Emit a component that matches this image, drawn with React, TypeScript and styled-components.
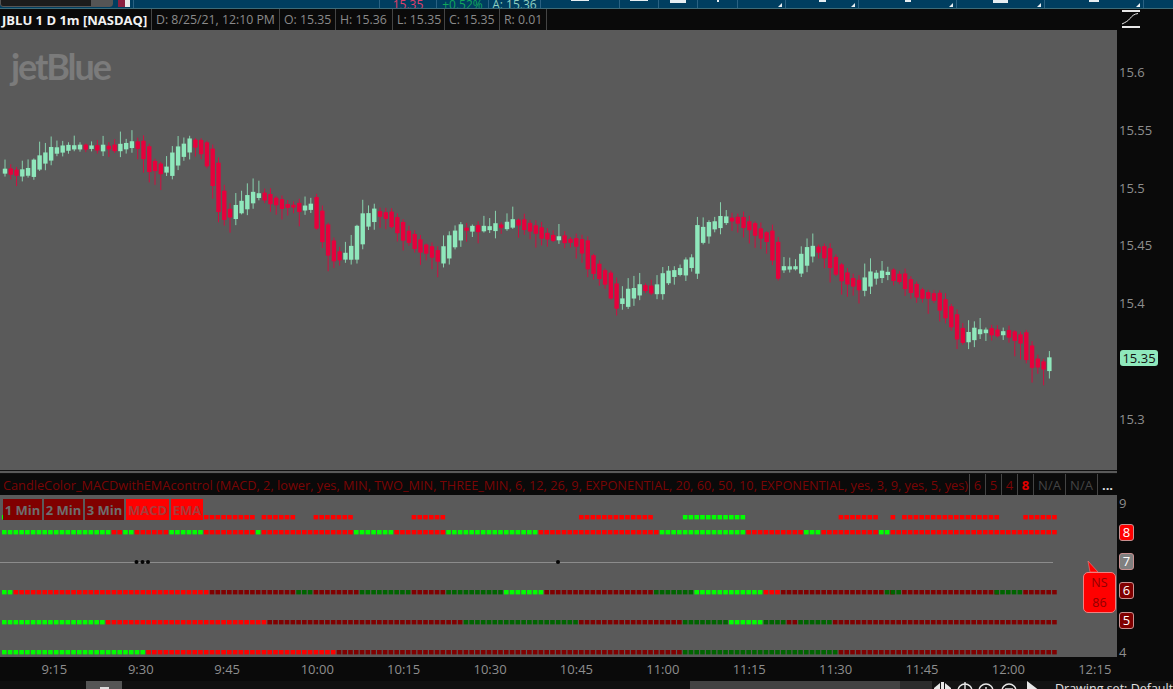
import React from "react";
import styled, { createGlobalStyle } from "styled-components";

const Global = createGlobalStyle`
  html, body { margin: 0; padding: 0; background: #0a0a0a; overflow: hidden; }
  * { box-sizing: border-box; }
`;

const FONT = `"Open Sans", "Noto Sans", "Liberation Sans", sans-serif`;

const Page = styled.div`
  width: 1173px; height: 689px; display: flex; flex-direction: column;
  background: #0a0a0a; font-family: ${FONT}; font-size: 13px; overflow: hidden;
`;
const TopBar = styled.div`
  height: 9px; flex: none; display: flex; background: #003e60;
  border-bottom: 1px solid #3d6b78; overflow: hidden;
`;
const TopCell = styled.div<{ $w: number }>`
  position: relative; width: ${(p) => p.$w}px; height: 8px; flex: none;
  display: flex; justify-content: center; align-items: flex-end;
  border-right: 1px solid #2a6283; overflow: hidden;
`;
const TopText = styled.span<{ $c: string }>`
  color: ${(p) => p.$c}; font-size: 12px; line-height: 14px; margin-bottom: -4px; white-space: nowrap;
`;
const TopInput = styled.div`
  position: absolute; left: 0; top: -6px; width: 113px; height: 13px; background: #1c1c1c;
  border: 1px solid #555; border-radius: 0 0 3px 3px; display: flex; justify-content: flex-end;
`;
const TopInputBtn = styled.div`width: 21px; background: #555;`;
const TopIcon = styled.div`
  position: absolute; left: 118px; top: 0; width: 12px; height: 7px;
  background: linear-gradient(90deg, #8a2040 0 55%, #e8e8e8 55% 100%);
`;
const TopBlock = styled.div<{ $w: number; $h: number }>`
  width: ${(p) => p.$w}px; height: ${(p) => p.$h}px; background: #e6eef2; align-self: flex-start;
`;
const Corner = styled.div`
  position: absolute; right: 3px; bottom: 1px; width: 0; height: 0;
  border-left: 4px solid transparent; border-bottom: 4px solid #e8eef2;
`;
const Main = styled.div`flex: none; height: 672px; display: flex;`;
const LeftCol = styled.div`width: 1117px; flex: none; display: flex; flex-direction: column;`;
const Header = styled.div`
  height: 21px; flex: none; display: flex; align-items: center; background: #0a0a0a;
`;
const HeadCell = styled.div<{ $w: number; $strong?: boolean }>`
  width: ${(p) => p.$w}px; height: 21px; flex: none; padding-left: ${(p) => (p.$strong ? 2 : 4)}px;
  display: flex; align-items: center; white-space: nowrap;
  border-right: 1px solid #444;
  font-size: ${(p) => (p.$strong ? 13 : 12.3)}px;
  color: ${(p) => (p.$strong ? "#f2f2f2" : "#8a8a8a")};
  font-weight: ${(p) => (p.$strong ? 700 : 400)};
`;
const PriceChart = styled.div`
  position: relative; height: 440px; flex: none; background: #5a5a5a;
`;
const ChartSvg = styled.svg`display: block;`;
const Logo = styled.div`
  position: absolute; left: 11px; top: 14px; color: #7b7b7b; font-family: "Lato", ${FONT};
  font-size: 36px; line-height: 44px; letter-spacing: -2.1px; font-weight: 700;
`;
const Divider = styled.div`
  height: 4px; flex: none; background: #5a5a5a;
  border-top: 1px solid #111; border-bottom: 1px solid #111;
`;
const LowerHeader = styled.div`
  height: 21px; flex: none; display: flex; background: #0a0a0a; align-items: center;
`;
const StudyTitle = styled.div`
  width: 969px; flex: none; padding-left: 3px; color: #7a0505; white-space: nowrap;
  font-size: 12.75px; overflow: hidden;
`;
const StudyCell = styled.div<{ $w: number; $c: string; $b?: boolean }>`
  width: ${(p) => p.$w}px; height: 21px; flex: none; display: flex; align-items: center; justify-content: center;
  border-left: 1px solid #444; color: ${(p) => p.$c}; font-weight: ${(p) => (p.$b ? 700 : 400)};
`;
const LowerChart = styled.div`
  position: relative; height: 162px; flex: none; background: #5a5a5a;
`;
const Labels = styled.div`
  position: absolute; left: 3px; top: 4px; display: flex; gap: 2px;
`;
const Label = styled.div<{ $w: number; $bright?: boolean }>`
  width: ${(p) => p.$w}px; height: 21px; display: flex; align-items: center; justify-content: center;
  background: ${(p) => (p.$bright ? "#ff0000" : "#800000")};
  color: ${(p) => (p.$bright ? "#a83a3a" : "#6e6e6e")};
  font-size: 13px; font-weight: 700; white-space: nowrap;
`;
const Bubble = styled.div`
  position: absolute; left: 1083px; top: 77px; width: 33px; height: 41px; background: #ff0000;
  border: 1px solid #f08080; border-radius: 5px; color: #8f0000; font-size: 12.5px; line-height: 20px;
  text-align: center; z-index: 2;
`;
const BubbleTail = styled.svg`position: absolute; left: 3px; top: -12px; overflow: visible;`;
const XAxis = styled.div`
  height: 24px; flex: none; display: flex; align-items: center; padding-left: 41.5px;
  background: #0a0a0a; color: #8e8e8e;
`;
const XTick = styled.div`width: 86.4px; flex: none; text-align: left; font-size: 13px;`;

const AxisCol = styled.div`
  width: 56px; flex: none; display: flex; flex-direction: column; color: #8e8e8e; position: relative;
`;
const SigmaIcon = styled.svg`position: absolute; left: 4px; top: 0;`;
const PriceAxis = styled.div`
  height: 461px; flex: none; padding-top: 34px; display: flex; flex-direction: column; position: relative;
`;
const PriceRow = styled.div`
  height: 57.83px; flex: none; display: flex; align-items: center; padding-left: 2px; font-size: 13px;
`;
const PriceTag = styled.div`
  position: absolute; left: 3px; top: 341px; width: 38px; height: 16px; border-radius: 3px;
  background: #8fe8bc; color: #111; font-size: 13px; line-height: 16px; text-align: center;
`;
const LowerAxis = styled.div`
  padding-top: 18px; display: flex; flex-direction: column;
`;
const LowerRow = styled.div<{ $gap?: number }>`
  height: 29.4px; flex: none; display: flex; align-items: center; padding-left: 2px; font-size: 13px;
  margin-top: ${(p) => p.$gap ?? 0}px;
`;
const LevelTag = styled.div<{ $bg: string }>`
  width: 15px; height: 17px; border-radius: 3px; background: ${(p) => p.$bg}; color: #fff;
  border: 1px solid #c89090; text-align: center; font-size: 13px; line-height: 15px;
`;
const BottomBar = styled.div`
  height: 8px; flex: none; display: flex; align-items: flex-start; overflow: hidden; background: #131313; position: relative;
`;
const BottomLeft = styled.div`width: 86px; height: 8px; flex: none; background: #0f0f0f;`;
const BottomTab = styled.div`
  width: 36px; height: 8px; flex: none; background: #555; display: flex; justify-content: center; padding-top: 6px;
`;
const TabMark = styled.div`width: 9px; height: 2px; background: #ddd;`;
const Track = styled.div`width: 568px; height: 8px; flex: none; background: #101010;`;
const Thumb = styled.div`
  width: 210px; height: 8px; flex: none; background: #424242; display: flex; justify-content: center;
`;
const Stepper = styled.div`
  width: 32px; height: 8px; flex: none; background: #2c2c2c;
`;
const BottomIcons = styled.svg`flex: none; display: block;`;
const DrawingSet = styled.div`
  position: absolute; left: 1055px; top: 0; color: #e0e0e0; font-size: 12.5px; line-height: 16px; white-space: nowrap;
`;

/* ---- candles ---- */
const path: [number, number][] = [
  [3,171],[15,173],[28,171],[40,160],[52,150],[75,147],[100,148],[120,148],[131,144],[140,148],[150,165],[165,172],[175,155],[190,143],[200,147],
  [210,165],[220,205],[228,216],[240,205],[255,195],[265,197],[280,205],[300,208],[310,205],[320,228],[330,252],[342,258],[352,250],[360,225],[372,213],
  [385,215],[395,226],[410,241],[425,250],[440,259],[450,240],[460,230],[475,228],[490,228],[505,225],[515,222],[530,228],[545,236],[565,240],[580,245],
  [590,265],[605,280],[618,305],[628,295],[640,287],[655,292],[665,276],[680,270],[692,260],[698,235],[712,225],[725,218],[740,222],[755,232],[768,240],
  [778,268],[795,268],[810,250],[820,250],[830,262],[845,280],[860,286],[870,277],[885,272],[900,280],[915,292],[935,298],[950,318],[960,340],[975,332],
  [985,332],[1005,333],[1020,340],[1032,362],[1042,367],[1052,360],
];
const pathY = (x: number) => {
  for (let i = 1; i < path.length; i++) {
    if (x <= path[i][0]) {
      const [x0, y0] = path[i - 1];
      const [x1, y1] = path[i];
      return y0 + ((y1 - y0) * (x - x0)) / (x1 - x0);
    }
  }
  return path[path.length - 1][1];
};
const rnd = (n: number) => {
  const v = Math.sin(n * 12.9898 + 4.1) * 43758.5453;
  return v - Math.floor(v);
};
const candles = Array.from({ length: 182 }, (_, i) => {
  const x = 5 + i * 5.77;
  const close = pathY(x) + (rnd(i) - 0.5) * 2;
  const open = pathY(x - 5.77) + (rnd(i - 1) - 0.5) * 2;
  const up = close <= open;
  const mid = (open + close) / 2;
  const half = Math.abs(close - open) * 1.0 + 1.2 + rnd(i + 90) * 1.6;
  const top = mid - half;
  const bot = mid + half;
  const high = top - 1 - rnd(i + 300) * (up ? 13 : 5);
  const low = bot + 1 + rnd(i + 600) * (up ? 7 : 15);
  return { x, top, bot, high, low, up };
});

/* ---- dot rows ---- */
const G = "#00ff00", R = "#ff0000", D = "#800000", K = "#006400";
type Seg = [number, number, string];
const rows: { y: number; segs: Seg[] }[] = [
  { y: 517, segs: [[2,3,G],[205,254,R],[262,295,R],[314,352,R],[411,444,R],[578,652,R],[682,744,G],[837,877,R],[889,895,R],[900,998,R],[1022,1056,R]] },
  { y: 532, segs: [[2,110,G],[111,122,R],[123,134,G],[134,168,R],[168,203,G],[203,255,R],[255,261,G],[261,352,R],[353,393,G],[394,444,R],[445,537,G],[537,658,R],[658,745,G],[745,802,R],[802,820,G],[820,877,R],[877,889,G],[889,1056,R]] },
  { y: 592, segs: [[2,13,G],[13,209,R],[209,295,D],[295,313,K],[313,359,D],[359,410,K],[410,444,D],[444,503,K],[503,542,G],[542,652,D],[652,693,K],[693,762,G],[762,779,R],[779,883,D],[883,890,K],[890,893,D],[893,900,K],[900,997,D],[997,1021,K],[1021,1056,D]] },
  { y: 622, segs: [[2,105,G],[105,266,R],[266,462,D],[462,578,K],[578,681,D],[681,727,K],[727,762,G],[762,785,K],[785,796,D],[796,830,K],[830,1056,D]] },
  { y: 652, segs: [[2,145,G],[145,336,R],[336,681,D],[681,838,K],[838,1056,D]] },
];
const dotsFor = (segs: Seg[]) => {
  const out: { x: number; c: string }[] = [];
  for (const [a, b, c] of segs) {
    let i = Math.round((a - 2) / 5.77);
    if (b - a < 5) { out.push({ x: a, c }); continue; }
    for (; 2 + i * 5.77 + 2 <= b; i++) out.push({ x: 2 + i * 5.77, c });
  }
  return out;
};

const Candles = () => (
  <ChartSvg width={1117} height={440} viewBox="0 30 1117 440">
    {candles.map((c, i) => (
      <g key={i} fill={c.up ? "#8fe8bc" : "#e6003c"}>
        <rect x={c.x - 0.5} y={c.high} width={1} height={c.low - c.high} opacity={0.85} />
        <rect x={c.x - 2.2} y={c.top} width={4.4} height={c.bot - c.top} />
      </g>
    ))}
  </ChartSvg>
);

const DotRows = () => (
  <ChartSvg width={1117} height={162} viewBox="0 495 1117 162">
    <rect x={0} y={562} width={1053} height={1} fill="#8c8c8c" />
    {[136.5, 142.5, 148, 558].map((x) => (
      <circle key={x} cx={x} cy={562} r={2} fill="#050505" />
    ))}
    {rows.map((r) =>
      dotsFor(r.segs).map((d, i) => (
        <rect key={`${r.y}-${i}`} x={d.x} y={r.y - 2} width={4.6} height={4.4} fill={d.c} />
      ))
    )}
  </ChartSvg>
);

const head: [number, string][] = [
  [152, "JBLU 1 D 1m [NASDAQ]"],
  [128, "D: 8/25/21, 12:10 PM"],
  [56, "O: 15.35"],
  [57, "H: 15.36"],
  [52, "L: 15.35"],
  [55, "C: 15.35"],
  [47, "R: 0.01"],
];
const times = ["9:15","9:30","9:45","10:00","10:15","10:30","10:45","11:00","11:15","11:30","11:45","12:00","12:15"];
const prices = ["15.6","15.55","15.5","15.45","15.4","","15.3"];

export default function App() {
  return (
    <Page>
      <Global />
      <TopBar>
        <TopCell $w={134}><TopInput><TopInputBtn /></TopInput><TopIcon /></TopCell>
        <TopCell $w={246} />
        <TopCell $w={57}><TopText $c="#e0406a">15.35</TopText></TopCell>
        <TopCell $w={52}><TopText $c="#12a85a">+0.52%</TopText></TopCell>
        <TopCell $w={52}><TopText $c="#8fd0c0">A: 15.36</TopText></TopCell>
        <TopCell $w={79}><TopBlock $w={18} $h={1} /></TopCell>
        <TopCell $w={39}><TopBlock $w={18} $h={1} /></TopCell>
        <TopCell $w={39}><TopBlock $w={16} $h={3} /></TopCell>
        <TopCell $w={40}><TopBlock $w={2} $h={2} /></TopCell>
        <TopCell $w={48}><Corner /></TopCell>
        <TopCell $w={73}><TopBlock $w={7} $h={2} /><Corner /></TopCell>
        <TopCell $w={98}><TopBlock $w={6} $h={2} /><Corner /></TopCell>
        <TopCell $w={88}><TopBlock $w={15} $h={3} /><Corner /></TopCell>
        <TopCell $w={99}><TopBlock $w={10} $h={2} /><Corner /></TopCell>
      </TopBar>
      <Main>
        <LeftCol>
          <Header>
            {head.map(([w, t], i) => (
              <HeadCell key={t} $w={w} $strong={i === 0}>{t}</HeadCell>
            ))}
          </Header>
          <PriceChart>
            <Candles />
            <Logo>jetBlue</Logo>
          </PriceChart>
          <Divider />
          <LowerHeader>
            <StudyTitle>CandleColor_MACDwithEMAcontrol (MACD, 2, lower, yes, MIN, TWO_MIN, THREE_MIN, 6, 12, 26, 9, EXPONENTIAL, 20, 60, 50, 10, EXPONENTIAL, yes, 3, 9, yes, 5, yes)</StudyTitle>
            <StudyCell $w={16} $c="#7a0505">6</StudyCell>
            <StudyCell $w={16} $c="#7a0505">5</StudyCell>
            <StudyCell $w={16} $c="#7a0505">4</StudyCell>
            <StudyCell $w={16} $c="#e00000" $b>8</StudyCell>
            <StudyCell $w={32} $c="#444">N/A</StudyCell>
            <StudyCell $w={32} $c="#444">N/A</StudyCell>
            <StudyCell $w={20} $c="#ddd" $b>...</StudyCell>
          </LowerHeader>
          <LowerChart>
            <DotRows />
            <Labels>
              <Label $w={39}>1 Min</Label>
              <Label $w={39}>2 Min</Label>
              <Label $w={39}>3 Min</Label>
              <Label $w={43} $bright>MACD</Label>
              <Label $w={32} $bright>EMA</Label>
            </Labels>
            <Bubble>
              <BubbleTail width={12} height={12} viewBox="0 0 12 12">
                <path d="M1 0 L11 11 L3 11 Z" fill="#ff0000" stroke="#f08080" strokeWidth={0.6} />
              </BubbleTail>
              NS<br />86
            </Bubble>
          </LowerChart>
          <XAxis>
            {times.map((t) => <XTick key={t}>{t}</XTick>)}
          </XAxis>
        </LeftCol>
        <AxisCol>
          <PriceAxis>
            <SigmaIcon width={20} height={20} viewBox="0 0 20 20">
              <rect x={1} y={1} width={18} height={2} fill="#e8e8e8" />
              <rect x={1} y={17} width={18} height={2} fill="#e8e8e8" />
              <path d="M1 15 C5 13 7 12 9 9.5 C11 7 13 5 17 4.5" fill="none" stroke="#e8e8e8" strokeWidth={1} />
            </SigmaIcon>
            {prices.map((p, i) => <PriceRow key={i}>{p}</PriceRow>)}
            <PriceTag>15.35</PriceTag>
          </PriceAxis>
          <LowerAxis>
            <LowerRow>9</LowerRow>
            <LowerRow><LevelTag $bg="#ff0000">8</LevelTag></LowerRow>
            <LowerRow><LevelTag $bg="#808080">7</LevelTag></LowerRow>
            <LowerRow><LevelTag $bg="#800000">6</LevelTag></LowerRow>
            <LowerRow><LevelTag $bg="#800000">5</LevelTag></LowerRow>
            <LowerRow $gap={2}>4</LowerRow>
          </LowerAxis>
        </AxisCol>
      </Main>
      <BottomBar>
        <BottomLeft />
        <BottomTab><TabMark /></BottomTab>
        <Track />
        <Thumb />
        <Stepper />
        <BottomIcons width={115} height={8} viewBox="0 0 115 8">
          <g fill="#e8e8e8">
            <path d="M2 7 L8 2 V8 H2 Z" />
            <rect x={9} y={1} width={3} height={7} />
            <path d="M13 2 L19 7 V8 H13 Z" />
          </g>
          <g fill="none" stroke="#e8e8e8" strokeWidth={1.4}>
            <circle cx={33} cy={10} r={7} />
            <path d="M33 1 V8" />
            <circle cx={54} cy={10} r={7} />
            <path d="M50 10 H58 M54 6 V14" />
            <circle cx={77} cy={10} r={7} />
            <path d="M73 8 H81" />
          </g>
          <path d="M95 0 L108 10 H95 Z" fill="#e8e8e8" />
        </BottomIcons>
        <DrawingSet>Drawing set: Default</DrawingSet>
      </BottomBar>
    </Page>
  );
}
